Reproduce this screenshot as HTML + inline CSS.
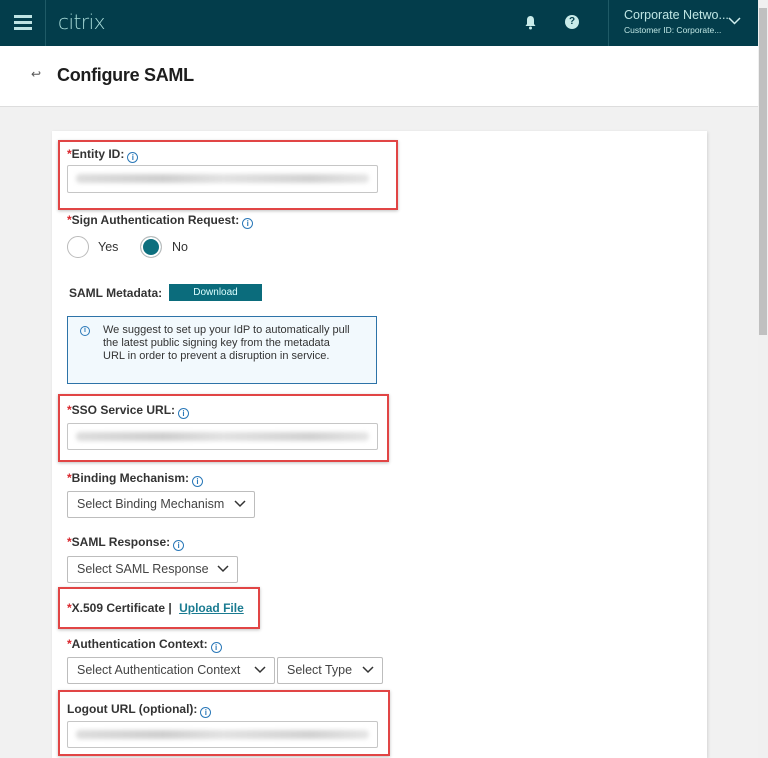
<!DOCTYPE html>
<html><head><meta charset="utf-8"><style>
*{margin:0;padding:0;box-sizing:border-box}
html,body{width:768px;height:758px;overflow:hidden}
body{background:#f1f1f1;font-family:"Liberation Sans",sans-serif;position:relative;color:#222}
.a{position:absolute}
.top{left:0;top:0;width:758px;height:46px;background:#033d4b}
.lbl{position:absolute;font-size:12px;font-weight:bold;color:#333;white-space:nowrap}
.lbl .s{color:#d9262c}
.i{display:inline-block;width:11px;height:11px;border:1.3px solid #2a78b8;border-radius:50%;font-size:8px;line-height:9px;text-align:center;color:#2a78b8;font-weight:bold;vertical-align:-2px;margin-left:3px}
.inp{position:absolute;border:1px solid #c6c6c6;background:#fff;border-radius:2px}
.inp:after{content:"";position:absolute;left:8px;right:8px;top:8px;height:9px;background:linear-gradient(90deg,#ddd,#cfcfcf 30%,#e2e2e2 50%,#d2d2d2 80%,#e6e6e6);filter:blur(2px);border-radius:4px}
.red{position:absolute;border:2px solid #e14545;box-shadow:0 1px 3px rgba(0,0,0,.25)}
.sel{position:absolute;border:1px solid #bdbdbd;background:#fff;border-radius:2px;font-size:12.5px;color:#444;padding-left:9px;line-height:25px;white-space:nowrap}
.sel svg{position:absolute;right:8px;top:8px}
</style></head><body>
<div class="a top"></div>
<div class="a" style="left:14px;top:15px;width:18px;height:3px;background:#bfe3e3;box-shadow:0 6px 0 #bfe3e3,0 12px 0 #bfe3e3"></div>
<div class="a" style="left:45px;top:0;width:1px;height:46px;background:#1f5a66"></div>
<div class="a" style="left:58px;top:10px;font-size:20px;color:#a9dcd9;font-family:'DejaVu Sans',sans-serif;font-weight:200;letter-spacing:-0.5px">citrix</div>
<svg class="a" style="left:524px;top:15px" width="13" height="15" viewBox="0 0 13 15"><path d="M6.5 1C4 1 3 3 3 5v4L1.5 11h10L10 9V5C10 3 9 1 6.5 1z" fill="#c9ebe9"/><circle cx="6.5" cy="13" r="1.5" fill="#c9ebe9"/></svg>
<div class="a" style="left:565px;top:15px;width:14px;height:14px;border-radius:50%;background:#c9ebe9;color:#033d4b;font-size:10px;font-weight:bold;text-align:center;line-height:14px">?</div>
<div class="a" style="left:608px;top:0;width:1px;height:46px;background:#1f5a66"></div>
<div class="a" style="left:624px;top:8px;font-size:12.5px;color:#bfe6e4">Corporate Netwo...</div>
<div class="a" style="left:624px;top:25px;font-size:8.5px;color:#bfe6e4">Customer ID: Corporate...</div>
<svg class="a" style="left:728px;top:17px" width="13" height="8"><path d="M1 1l5.5 5.5L12 1" stroke="#d0eeee" stroke-width="1.5" fill="none"/></svg>
<div class="a" style="left:0;top:46px;width:758px;height:61px;background:#fff;border-bottom:1px solid #ddd"></div>
<div class="a" style="left:31px;top:67px;font-size:12px;color:#555">↩</div>
<div class="a" style="left:57px;top:65px;font-size:18px;font-weight:bold;color:#1d1d1d;letter-spacing:-0.3px">Configure SAML</div>
<div class="a" style="left:758px;top:0;width:10px;height:758px;background:#f0f0f0"></div>
<div class="a" style="left:759px;top:8px;width:8px;height:327px;background:#c0c0c0"></div>
<div class="a" style="left:52px;top:131px;width:655px;height:627px;background:#fff;box-shadow:1px 1px 3px rgba(0,0,0,.12)"></div>

<div class="red" style="left:58px;top:140px;width:340px;height:70px"></div>
<div class="lbl" style="left:67px;top:147px"><span class="s">*</span>Entity ID:<span class="i">i</span></div>
<div class="inp" style="left:67px;top:165px;width:311px;height:28px"></div>

<div class="lbl" style="left:67px;top:213px"><span class="s">*</span>Sign Authentication Request:<span class="i">i</span></div>
<div class="a" style="left:67px;top:236px;width:22px;height:22px;border:1px solid #bbb;border-radius:50%"></div>
<div class="a" style="left:98px;top:240px;font-size:12.5px;color:#333">Yes</div>
<div class="a" style="left:140px;top:236px;width:22px;height:22px;border:1px solid #bbb;border-radius:50%;background:#0c6f7e;box-shadow:inset 0 0 0 2px #fff"></div>
<div class="a" style="left:172px;top:240px;font-size:12.5px;color:#333">No</div>

<div class="lbl" style="left:69px;top:286px">SAML Metadata:</div>
<div class="a" style="left:169px;top:284px;width:93px;height:17px;background:#0b6c7c;color:#dff;font-size:10px;text-align:center;line-height:17px">Download</div>

<div class="a" style="left:67px;top:316px;width:310px;height:68px;border:1px solid #2d73a8;background:#f2f9fd"></div>
<div class="a" style="left:80px;top:326px;width:10px;height:10px;border:1.2px solid #2a78b8;border-radius:50%;font-size:7px;line-height:8px;text-align:center;color:#2a78b8;font-weight:bold">i</div>
<div class="a" style="left:103px;top:324px;font-size:11px;line-height:13px;color:#333;width:250px">We suggest to set up your IdP to automatically pull the latest public signing key from the metadata URL in order to prevent a disruption in service.</div>

<div class="red" style="left:58px;top:394px;width:331px;height:68px"></div>
<div class="lbl" style="left:67px;top:403px"><span class="s">*</span>SSO Service URL:<span class="i">i</span></div>
<div class="inp" style="left:67px;top:423px;width:311px;height:27px"></div>

<div class="lbl" style="left:67px;top:471px"><span class="s">*</span>Binding Mechanism:<span class="i">i</span></div>
<div class="sel" style="left:67px;top:491px;width:188px;height:27px">Select Binding Mechanism<svg width="12" height="8"><path d="M1 1l5 5 5-5" stroke="#333" stroke-width="1.5" fill="none"/></svg></div>

<div class="lbl" style="left:67px;top:535px"><span class="s">*</span>SAML Response:<span class="i">i</span></div>
<div class="sel" style="left:67px;top:556px;width:171px;height:27px">Select SAML Response<svg width="12" height="8"><path d="M1 1l5 5 5-5" stroke="#333" stroke-width="1.5" fill="none"/></svg></div>

<div class="red" style="left:58px;top:587px;width:202px;height:42px"></div>
<div class="lbl" style="left:67px;top:601px"><span class="s">*</span>X.509 Certificate | <span style="color:#1a7b91;text-decoration:underline;margin-left:4px">Upload File</span></div>

<div class="lbl" style="left:67px;top:637px"><span class="s">*</span>Authentication Context:<span class="i">i</span></div>
<div class="sel" style="left:67px;top:657px;width:208px;height:27px">Select Authentication Context<svg width="12" height="8"><path d="M1 1l5 5 5-5" stroke="#333" stroke-width="1.5" fill="none"/></svg></div>
<div class="sel" style="left:277px;top:657px;width:106px;height:27px">Select Type<svg width="12" height="8"><path d="M1 1l5 5 5-5" stroke="#333" stroke-width="1.5" fill="none"/></svg></div>

<div class="red" style="left:58px;top:690px;width:332px;height:66px"></div>
<div class="lbl" style="left:67px;top:702px">Logout URL (optional):<span class="i">i</span></div>
<div class="inp" style="left:67px;top:721px;width:311px;height:27px"></div>
</body></html>
